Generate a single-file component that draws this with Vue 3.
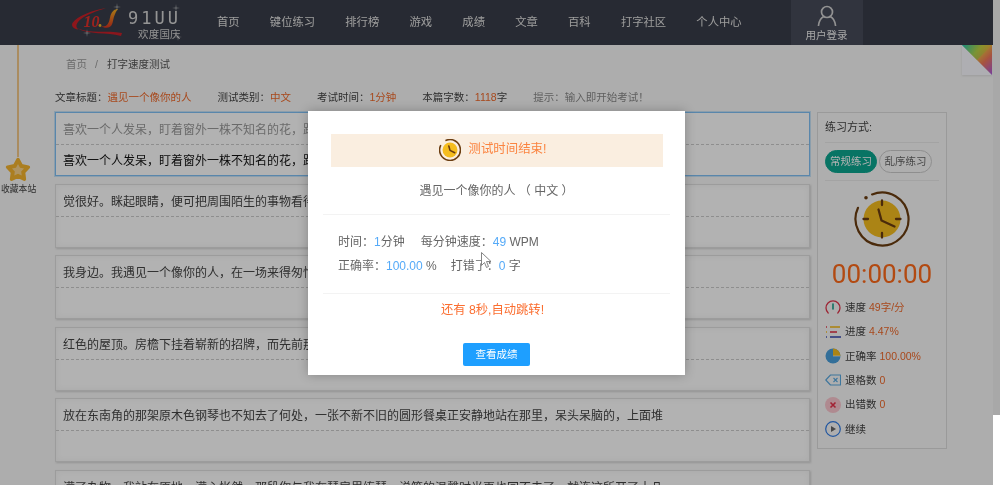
<script setup>
const nav = ['首页', '键位练习', '排行榜', '游戏', '成绩', '文章', '百科', '打字社区', '个人中心']
const rows = [
  '觉很好。眯起眼睛，便可把周围陌生的事物看得',
  '我身边。我遇见一个像你的人，在一场来得匆忙',
  '红色的屋顶。房檐下挂着崭新的招牌，而先前那',
  '放在东南角的那架原木色钢琴也不知去了何处，一张不新不旧的圆形餐桌正安静地站在那里，呆头呆脑的，上面堆',
  '满了杂物。我站在原地，满心怅然。那段你与我在琴房里练琴，说笑的温馨时光再也回不去了，就连这所开了十几'
]
const first = '喜欢一个人发呆，盯着窗外一株不知名的花，路'
const sparks = [[117, 7], [176, 8], [87, 33], [178, 37]]
</script>

<template>
  <div class="page">
    <header class="top">
      <div class="logo">
        <svg class="logo-mark" width="52" height="30" viewBox="0 0 52 30">
          <defs>
            <linearGradient id="flame" x1="0" y1="0" x2="0" y2="1">
              <stop offset="0" stop-color="#f0b020" />
              <stop offset="1" stop-color="#d8321f" />
            </linearGradient>
          </defs>
          <path d="M35 1C22 3 6 9 1.500 16c-1.500 3 1 6 6 6.500C4 20 5 16 10 12 16 7.500 26 4 35 1z" fill="#cc2028" />
          <path d="M6 21c12 6 30 2 45 5l-1 3C36 25 17 28 6 21z" fill="#c8202a" />
          <path d="M47 2c-3 0-6 2-7.500 6.500-1 4-1.500 9-5 10.500-2 .5-3 .5-4.500 0 4 3 10 2.500 11.500-3 1-4 2-10 5.500-14z" fill="url(#flame)" />
          <text x="12.500" y="20" class="logo-num">10</text>
          <circle cx="29" cy="18.500" r="1.400" fill="#f0b428" />
        </svg>
        <div class="logo-text">
          <span class="logo-name">91UU</span>
          <span class="logo-sub">欢度国庆</span>
        </div>
      </div>
      <nav class="nav">
        <a v-for="n in nav" :key="n">{{ n }}</a>
      </nav>
      <div class="user">
        <svg width="20" height="21" viewBox="0 0 20 21" fill="none" stroke="#d2d2d2" stroke-width="1.700">
          <circle cx="10" cy="7" r="5.500" />
          <path d="M1.500 20.500c.6-5 3.200-8 5.300-9M18.500 20.500c-.6-5-3.200-8-5.300-9" stroke-linecap="round" />
        </svg>
        <span>用户登录</span>
      </div>
    </header>

    <svg class="sparkles" width="190" height="45" viewBox="0 0 190 45">
      <g v-for="(s, i) in sparks" :key="i" :transform="`translate(${s[0]} ${s[1]})`">
        <path d="M0-4 .5-.5 4 0 .5.5 0 4-.5.5-4 0-.5-.5z" fill="#fff" opacity=".5" />
      </g>
    </svg>

    <div class="body">
      <aside class="rail">
        <i class="rail-line"></i>
        <svg class="star" width="26" height="25" viewBox="0 0 26 25">
          <path d="M13 2.500l3.400 6.300 7 1.300-4.900 5.200.9 7-6.400-3.100-6.400 3.100.9-7-4.900-5.200 7-1.300z" fill="#f5b52e" stroke="#f5b52e" stroke-width="3.500" stroke-linejoin="round" />
          <path d="M13 7l2 3.700 4 .7-2.800 3 .5 4.100-3.700-1.800-3.700 1.800.5-4.100-2.800-3 4-.7z" fill="#fbd58c" />
        </svg>
        <span class="rail-text">收藏本站</span>
      </aside>

      <main class="main">
        <div class="crumb"><span class="crumb-home">首页</span><span class="crumb-sep">/</span><span>打字速度测试</span></div>
        <div class="info">
          <span>文章标题：<b>遇见一个像你的人</b></span>
          <span>测试类别：<b>中文</b></span>
          <span>考试时间：<b>1分钟</b></span>
          <span>本篇字数：<b>1118</b>字</span>
          <span class="tip">提示：输入即开始考试！</span>
        </div>
        <div class="content">
          <section class="article">
            <div class="box active">
              <div class="line muted">{{ first }}</div>
              <div class="line typed">{{ first }}</div>
            </div>
            <div v-for="r in rows" :key="r" class="box">
              <div class="line">{{ r }}</div>
              <div class="line"></div>
            </div>
          </section>

          <aside class="side">
            <div class="side-title">练习方式:</div>
            <div class="pills">
              <span class="pill on">常规练习</span>
              <span class="pill">乱序练习</span>
            </div>
            <svg class="clock" width="56" height="56" viewBox="0 0 56 56">
              <circle cx="28" cy="28" r="18.500" fill="#f5bd1f" />
              <path d="M18.100 3.400A26.500 26.500 0 1 1 4 16.800" fill="none" stroke="#6b3d10" stroke-width="2.200" stroke-linecap="round" />
              <circle cx="12" cy="6.800" r="1.800" fill="#6b3d10" />
              <path d="M28 9.500v4.500M28 42v4.500M9.500 28H14M42 28h4.500M24.500 18.500l3 11 13 6" fill="none" stroke="#6b3d10" stroke-width="2.300" stroke-linecap="round" stroke-linejoin="round" />
            </svg>
            <div class="time">00:00:00</div>
            <ul class="stats">
              <li>
                <svg width="16" height="16" viewBox="0 0 16 16" fill="none"><path d="M3.200 14A7 7 0 1 1 12.800 14" stroke="#e0364c" stroke-width="1.300" stroke-linecap="round" /><path d="M8 5v5" stroke="#17a08a" stroke-width="1.600" stroke-linecap="round" /></svg>
                <span>速度</span><b>49字/分</b>
              </li>
              <li>
                <svg width="16" height="16" viewBox="0 0 16 16" fill="none" stroke-width="1.600"><path d="M1 3h1" stroke="#e0364c" /><path d="M1 8h1" stroke="#f5bd1f" /><path d="M1 13h1" stroke="#3f51b5" /><path d="M5 3h10" stroke="#f5bd1f" /><path d="M5 8h7" stroke="#e0364c" /><path d="M5 13h11" stroke="#3f51b5" /></svg>
                <span>进度</span><b>4.47%</b>
              </li>
              <li>
                <svg width="16" height="16" viewBox="0 0 16 16"><circle cx="8" cy="8" r="7.500" fill="#4a9fdb" /><path d="M8 8V.5A7.500 7.500 0 0 1 15.500 8z" fill="#f5bd1f" /><path d="M8 8h7.500" stroke="#fff" stroke-width=".6" /></svg>
                <span>正确率</span><b>100.00%</b>
              </li>
              <li>
                <svg width="16" height="16" viewBox="0 0 16 16" fill="none" stroke="#5aa9e0" stroke-width="1.100"><path d="M5.500 3H15.500V13H5.500L.8 8z" stroke-linejoin="round" /><path d="M8.500 6l4 4M12.500 6l-4 4" /></svg>
                <span>退格数</span><b>0</b>
              </li>
              <li>
                <svg width="16" height="16" viewBox="0 0 16 16" fill="none"><circle cx="8" cy="8" r="8" fill="#fbc6cf" /><path d="M5.500 5.500l5 5M10.500 5.500l-5 5" stroke="#e8304a" stroke-width="1.600" /></svg>
                <span>出错数</span><b>0</b>
              </li>
              <li>
                <svg width="16" height="16" viewBox="0 0 16 16"><circle cx="8" cy="8" r="7.300" fill="none" stroke="#2f7be5" stroke-width="1.200" /><path d="M6 5l5 3-5 3z" fill="#666" /></svg>
                <span>继续</span>
              </li>
            </ul>
          </aside>
        </div>
      </main>
    </div>

    <svg class="ribbon" width="31" height="31" viewBox="0 0 31 31">
      <defs>
        <linearGradient id="rib" x1="0" y1="0" x2="1" y2="1">
          <stop offset="0" stop-color="#25c7b0" />
          <stop offset=".35" stop-color="#e8d83a" />
          <stop offset=".65" stop-color="#f0785a" />
          <stop offset="1" stop-color="#a858e0" />
        </linearGradient>
        <linearGradient id="rib2" x1="0" y1="0" x2="1" y2="0">
          <stop offset="0" stop-color="#25c7b0" />
          <stop offset=".5" stop-color="#8dd050" />
          <stop offset="1" stop-color="#f0c030" />
        </linearGradient>
      </defs>
      <path d="M0 0V30H30z" fill="#fafaff" />
      <path d="M0 0H30V30z" fill="url(#rib)" />
      <path d="M0 0H30L15 15z" fill="url(#rib2)" opacity=".55" />
    </svg>

    <div class="shade">
      <div class="modal">
        <div class="banner">
          <svg width="22" height="22" viewBox="0 0 56 56">
            <circle cx="28" cy="28" r="19" fill="#f5bd1f" />
            <path d="M18.100 3.400A26.500 26.500 0 1 1 4 16.800" fill="none" stroke="#6b3d10" stroke-width="4" stroke-linecap="round" />
            <path d="M25 18l3 11 12 6" fill="none" stroke="#6b3d10" stroke-width="4" stroke-linecap="round" stroke-linejoin="round" />
          </svg>
          <span>测试时间结束!</span>
        </div>
        <div class="title">遇见一个像你的人 （ 中文 ）</div>
        <div class="result">
          <p><span class="cell">时间：<em>1</em>分钟</span><span>每分钟速度：<em>49</em> WPM</span></p>
          <p><span class="cell cell2">正确率：<em>100.00</em> %</span><span>打错了：<em>0</em> 字</span></p>
        </div>
        <div class="jump">还有 8秒,自动跳转!</div>
        <button class="view">查看成绩</button>
      </div>
      <svg class="cursor" width="11" height="17" viewBox="0 0 11 17">
        <path d="M.5.5v13l3-3 2 5 2-1-2-5h4.500z" fill="#fff" stroke="#777" stroke-width=".9" />
      </svg>
    </div>

    <div class="scrollbar"><i></i></div>
  </div>
</template>

<style scoped>
.page {
  position: relative;
  width: 1000px;
  height: 485px;
  overflow: hidden;
  background: #f8f8f8;
  font: 10.5px/1.4 "Liberation Sans", "Noto Sans CJK SC", sans-serif;
  color: #333;
  filter: blur(.6px);
}
.top {
  display: flex;
  align-items: center;
  height: 45px;
  background: #393d49;
  padding-left: 71px;
}
.logo { display: flex; align-items: flex-start; width: 146px; height: 45px; }
.logo-mark { margin-top: 7px; flex: none; }
.logo-num { font: italic 700 16px "Liberation Serif", serif; fill: #e0302a; }
.logo-text { display: flex; flex-direction: column; margin-left: 5px; color: #d4d4d4; }
.logo-name { font: 400 17px/18px "DejaVu Sans Mono", monospace; letter-spacing: 3px; margin-top: 9px; }
.logo-sub { font-size: 10.500px; line-height: 14px; margin: 0 0 0 10px; letter-spacing: .2px; }
.sparkles { position: absolute; left: 0; top: 0; }
.nav { display: flex; gap: 30.250px; font-size: 11.300px; color: #e0e0e0; }
.user {
  display: flex;
  flex-direction: column;
  align-items: center;
  justify-content: flex-end;
  width: 72px;
  height: 45px;
  margin-left: 49px;
  padding-bottom: 3px;
  box-sizing: border-box;
  background: #474b5a;
  color: #f0f0f0;
  font-size: 10.500px;
  line-height: 14px;
  gap: 2px;
}
.body { display: flex; }
.rail {
  position: relative;
  width: 55px;
  flex: none;
  display: flex;
  flex-direction: column;
  align-items: flex-start;
}
.rail-line { width: 2px; height: 112px; margin-left: 17px; background: #f4c98a; }
.star { margin: 0 0 0 5px; }
.rail-text { font-size: 8.800px; line-height: 12px; margin-left: 1px; color: #444; white-space: nowrap; margin-top: 1px; }
.main { width: 892px; flex: none; }
.crumb { display: flex; height: 38px; align-items: center; padding-left: 11px; color: #555; }
.crumb-home { color: #999; }
.crumb-sep { margin: 0 9px 0 8px; color: #999; }
.info { display: flex; height: 29px; align-items: center; gap: 26px; color: #444; white-space: nowrap; }
.info b { font-weight: 400; color: #f0692a; }
.info .tip { color: #888; }
.content { display: flex; gap: 7px; }
.article { width: 755px; flex: none; display: flex; flex-direction: column; gap: 7.500px; }
.box {
  box-sizing: border-box;
  height: 64px;
  flex: none;
  border: 1px solid #e0e0e0;
  background: #fff;
  box-shadow: 1px 1px 2px rgba(0, 0, 0, .15), inset 0 0 6px rgba(0, 0, 0, .05);
  font-size: 12px;
  color: #444;
  overflow: hidden;
}
.box.active {
  border-color: #80c0f5;
  box-shadow: 0 0 0 1px rgba(128, 192, 245, .4);
}
.line {
  height: 31px;
  line-height: 33px;
  padding-left: 7px;
  white-space: nowrap;
  overflow: hidden;
}
.line:first-child { border-bottom: 1px dashed #ccc; line-height: 35px; }
.muted { color: #999; }
.typed { color: #111; }
.side {
  box-sizing: border-box;
  width: 130px;
  height: 337px;
  border: 1px solid #ddd;
  background: #fafafa;
  padding: 0 7px;
  display: flex;
  flex-direction: column;
}
.side-title { height: 29px; line-height: 29px; border-bottom: 1px solid #eaeaea; color: #444; flex: none; font-size: 11px; }
.pills { height: 37px; border-bottom: 1px solid #eaeaea; display: flex; align-items: center; gap: 2px; flex: none; }
.pill {
  box-sizing: border-box;
  width: 53px;
  height: 23px;
  line-height: 21px;
  border: 1px solid #ccc;
  border-radius: 12px;
  text-align: center;
  color: #666;
}
.pill.on { width: 52px; background: #0ca690; border-color: #0ca690; color: #fff; }
.clock { align-self: center; margin-top: 10px; flex: none; }
.time {
  margin-top: 12px;
  height: 30px;
  line-height: 30px;
  text-align: center;
  font-family: Roboto, "Liberation Sans", sans-serif;
  font-size: 26px;
  color: #ff6a1a;
  font-weight: 400;
  flex: none;
}
.stats { list-style: none; margin: 6px 0 0; padding: 0; }
.stats li { display: flex; align-items: center; height: 24.400px; color: #444; }
.stats svg { flex: none; margin-right: 4px; }
.stats b { font-weight: 400; color: #f0692a; margin-left: 3px; }
.ribbon { position: absolute; left: 962px; top: 45px; filter: drop-shadow(0 1px 1px rgba(0, 0, 0, .1)); }
.shade {
  position: absolute;
  left: 0;
  top: 0;
  width: 993px;
  height: 485px;
  background: rgba(0, 0, 0, .3);
  display: flex;
  align-items: center;
  justify-content: center;
}
.modal {
  width: 377px;
  height: 264px;
  background: #fff;
  box-shadow: 0 0 10px rgba(0, 0, 0, .25);
  display: flex;
  flex-direction: column;
  align-items: center;
  font-size: 12px;
  color: #666;
}
.banner {
  box-sizing: border-box;
  margin-top: 23px;
  width: 332px;
  height: 33px;
  flex: none;
  background: #faeee0;
  display: flex;
  align-items: center;
  justify-content: center;
  gap: 8px;
  padding-right: 8px;
  color: #fb8440;
  font-size: 12.400px;
}
.title {
  width: 347px;
  height: 47px;
  line-height: 48px;
  text-align: center;
  border-bottom: 1px solid #f3f3f3;
  flex: none;
}
.result {
  width: 347px;
  padding: 15px 0;
  border-bottom: 1px solid #f3f3f3;
  flex: none;
}
.result p { display: flex; margin: 0 0 0 15px; line-height: 24px; white-space: pre; }
.cell { margin-right: 16px; }
.cell2 { margin-right: 14px; }
.result em { font-style: normal; color: #55aaf8; }
.jump { box-sizing: border-box; height: 32px; line-height: 32px; color: #fb6e30; flex: none; font-size: 12.300px; padding-right: 8px; }
.view {
  margin-top: 17px;
  width: 67px;
  height: 23px;
  border: 0;
  border-radius: 2px;
  background: #1e9fff;
  color: #fff;
  font: inherit;
  font-size: 10.500px;
  padding: 0;
}
.cursor { position: absolute; left: 481px; top: 252px; }
.scrollbar { position: absolute; right: 0; top: 0; bottom: 0; width: 7px; background: #fff; }
.scrollbar i { display: block; height: 415px; background: #a8a8a8; }
</style>
